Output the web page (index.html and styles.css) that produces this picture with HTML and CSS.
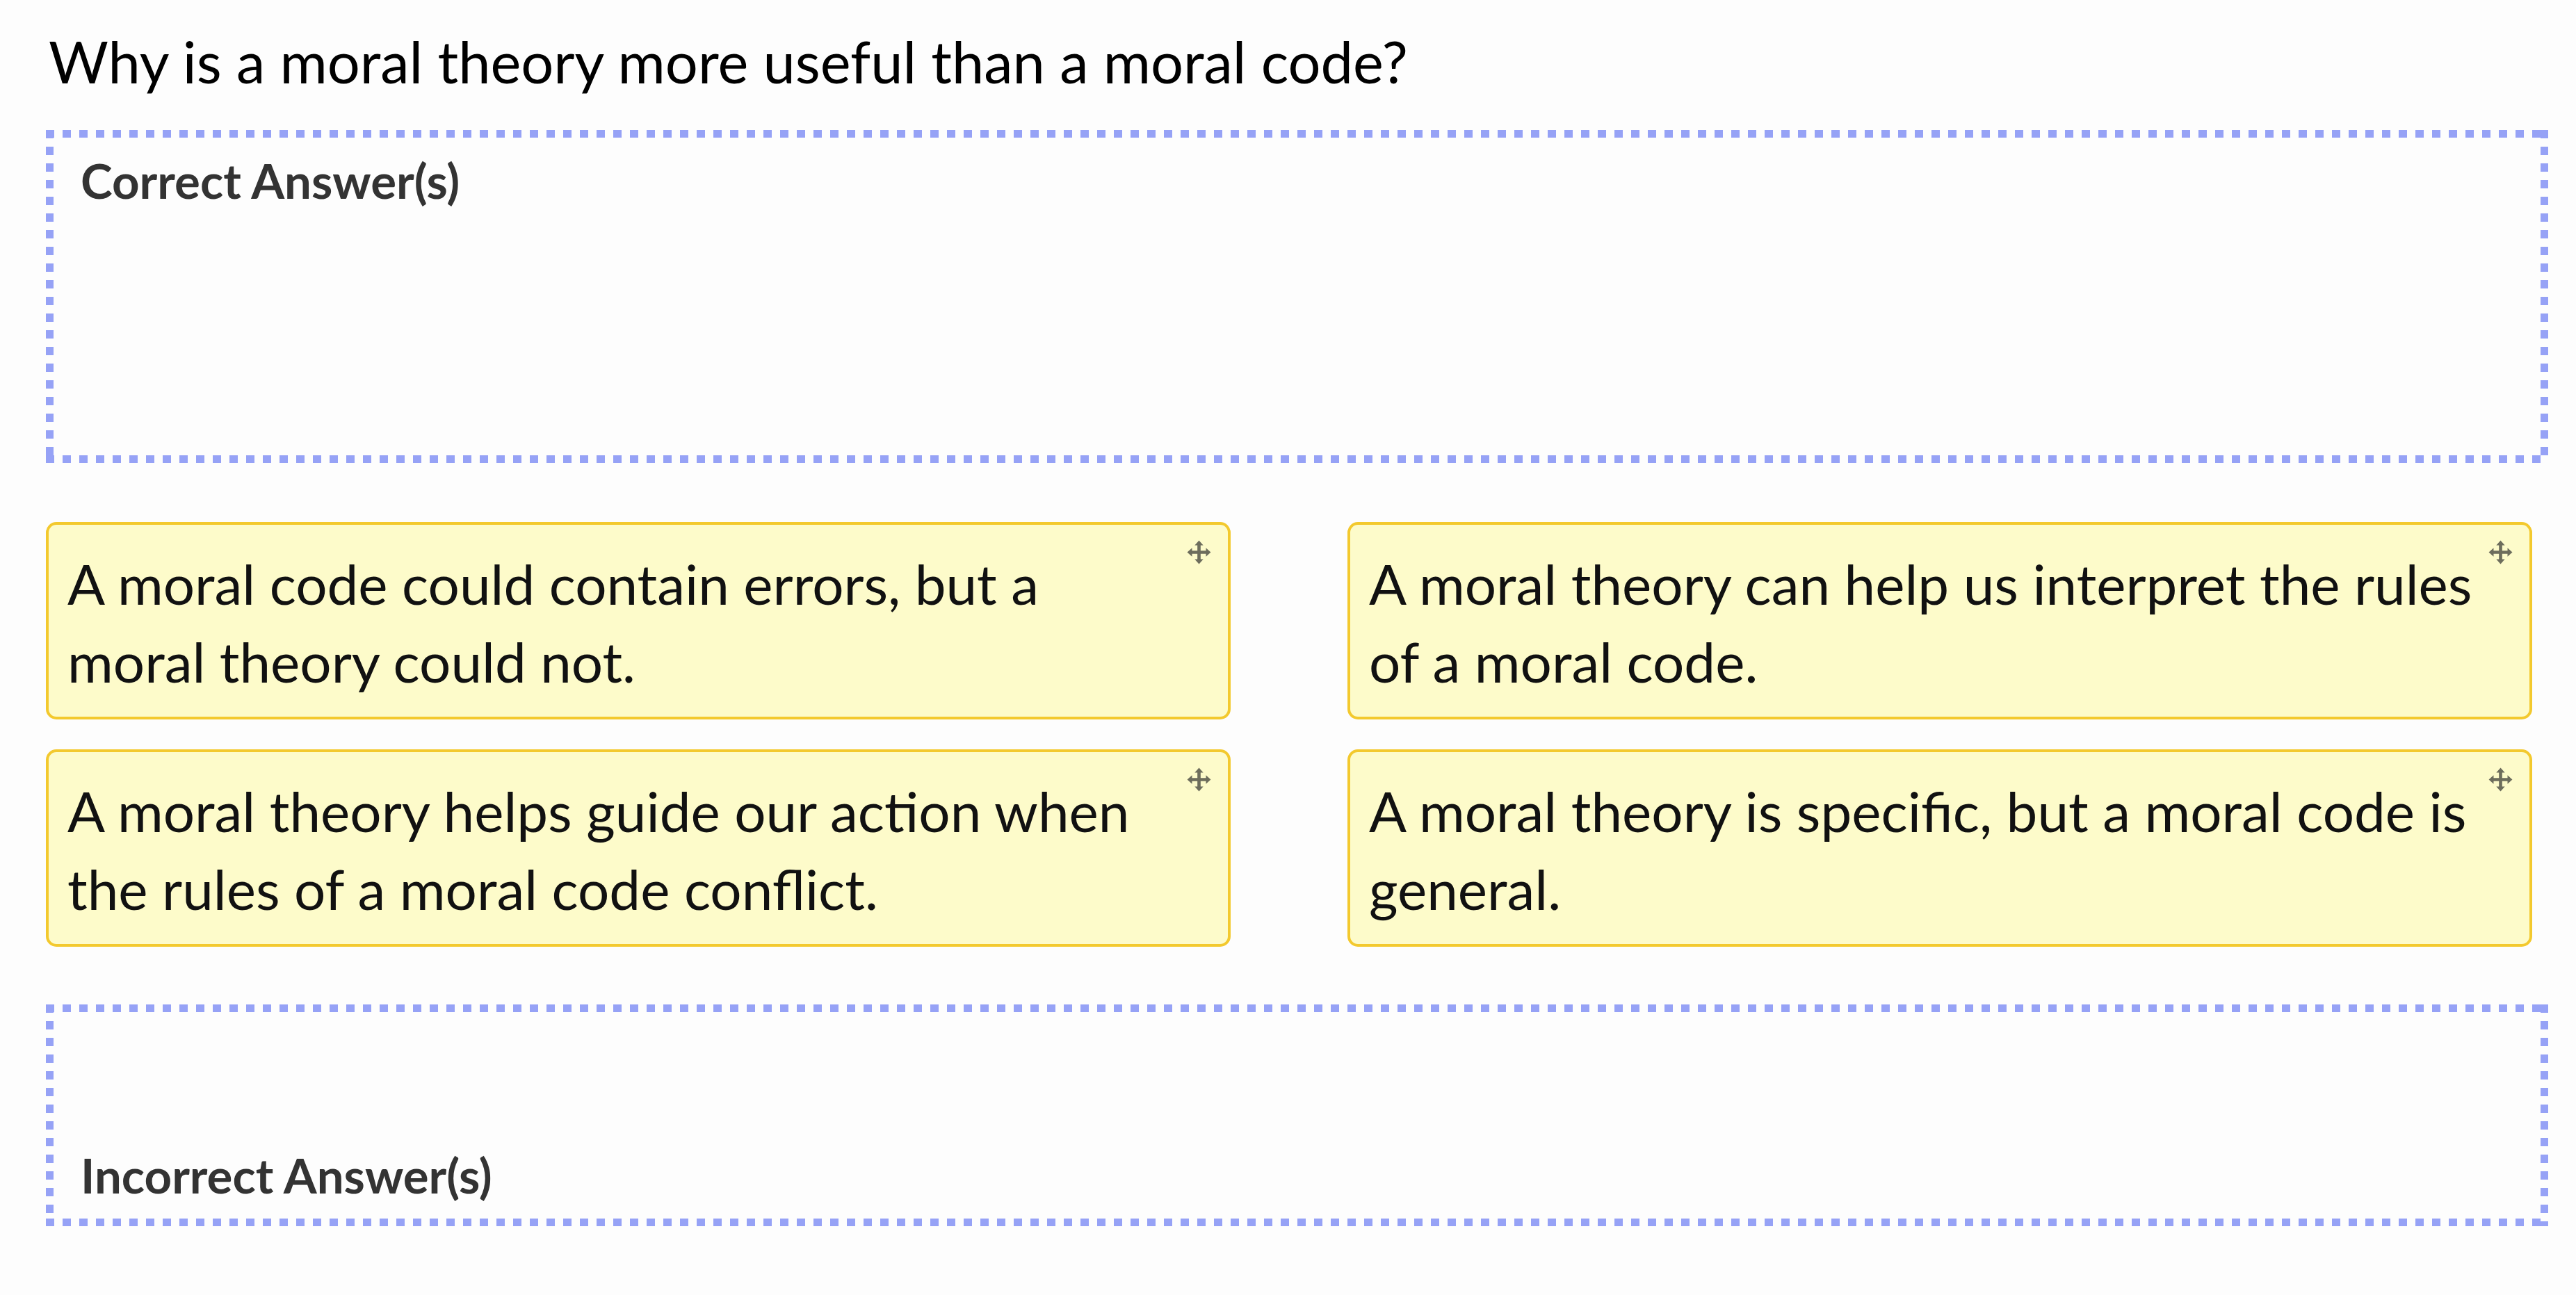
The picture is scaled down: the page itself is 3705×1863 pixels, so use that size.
FILE: index.html
```html
<!DOCTYPE html>
<html lang="en">

<head>
    <meta charset="UTF-8">
    <meta name="viewport" content="width=device-width, initial-scale=1.0">
    <title>Sort the Answers</title>
    <link rel="stylesheet" href="styles.css">
</head>

<body>
    <div class="question">
        <h1 class="prompt">Why is a moral theory more useful than a moral code?</h1>

        <!-- drop area for the right answers -->
        <div class="dropzone dropzone-correct">
            <h2 class="zone-label">Correct Answer(s)</h2>
        </div>

        <div class="choices">
            <div class="choice">
                <p>A moral code could contain errors, but a moral theory could not.</p>
                <span class="grip"><svg viewBox="0 0 24 24"><path d="M12 1L16 5.5H13.5V10.5H18.5V8L23 12L18.5 16V13.5H13.5V18.5H16L12 23L8 18.5H10.5V13.5H5.5V16L1 12L5.5 8V10.5H10.5V5.5H8Z"/></svg></span>
            </div>
            <div class="choice">
                <p>A moral theory can help us interpret the rules of a moral code.</p>
                <span class="grip"><svg viewBox="0 0 24 24"><path d="M12 1L16 5.5H13.5V10.5H18.5V8L23 12L18.5 16V13.5H13.5V18.5H16L12 23L8 18.5H10.5V13.5H5.5V16L1 12L5.5 8V10.5H10.5V5.5H8Z"/></svg></span>
            </div>
            <div class="choice">
                <p>A moral theory helps guide our action when the rules of a moral code conflict.</p>
                <span class="grip"><svg viewBox="0 0 24 24"><path d="M12 1L16 5.5H13.5V10.5H18.5V8L23 12L18.5 16V13.5H13.5V18.5H16L12 23L8 18.5H10.5V13.5H5.5V16L1 12L5.5 8V10.5H10.5V5.5H8Z"/></svg></span>
            </div>
            <div class="choice">
                <p>A moral theory is specific, but a moral code is general.</p>
                <span class="grip"><svg viewBox="0 0 24 24"><path d="M12 1L16 5.5H13.5V10.5H18.5V8L23 12L18.5 16V13.5H13.5V18.5H16L12 23L8 18.5H10.5V13.5H5.5V16L1 12L5.5 8V10.5H10.5V5.5H8Z"/></svg></span>
            </div>
        </div>

        <!-- drop area for the wrong answers -->
        <div class="dropzone dropzone-incorrect">
            <h2 class="zone-label">Incorrect Answer(s)</h2>
        </div>
    </div>
</body>

</html>
```

FILE: styles.css
```css
body {
    font-family: 'Lato', 'Open Sans', sans-serif;
    background-color: #fdfdfd;
    margin: 0;
    padding: 0;
    color: #000;
}

.question {
    padding: 40px 40px 0 66px;
}

.prompt {
    margin: 0 0 50px 4px;
    font-size: 83px;
    font-weight: 400;
    line-height: 97px;
    color: #000;
}

/* square dotted frame, drawn with gradients so the dots stay square */
.dropzone {
    box-sizing: border-box;
    display: flex;
    padding: 32px 40px 32px 50px;
    background:
        linear-gradient(to right, #96a2f6 50%, transparent 0) left top / 24px 11px repeat-x,
        linear-gradient(to right, #96a2f6 50%, transparent 0) left bottom / 24px 11px repeat-x,
        linear-gradient(to bottom, #96a2f6 50%, transparent 0) left top / 11px 24px repeat-y,
        linear-gradient(to bottom, #96a2f6 50%, transparent 0) right top / 11px 24px repeat-y;
}

.dropzone-correct {
    height: 479px;
    align-items: flex-start;
}

.dropzone-incorrect {
    height: 319px;
    align-items: flex-end;
}

.zone-label {
    margin: 0;
    font-size: 69px;
    font-weight: 700;
    line-height: 82px;
    color: #333;
}

.choices {
    display: grid;
    grid-template-columns: 1fr 1fr;
    gap: 43px 168px;
    margin: 85px 23px 83px 0;
}

.choice {
    position: relative;
    height: 284px;
    box-sizing: border-box;
    padding: 28px 69px 24px 27px;
    background-color: #fdfbca;
    border: 4px solid #f3c92e;
    border-radius: 15px;
}

.choice p {
    margin: 0;
    font-size: 80px;
    line-height: 112px;
    color: #111;
}

.grip {
    position: absolute;
    top: 21px;
    right: 23px;
    width: 37px;
    height: 37px;
}

.grip svg {
    display: block;
    width: 100%;
    height: 100%;
    fill: #6d6d5c;
}
```
